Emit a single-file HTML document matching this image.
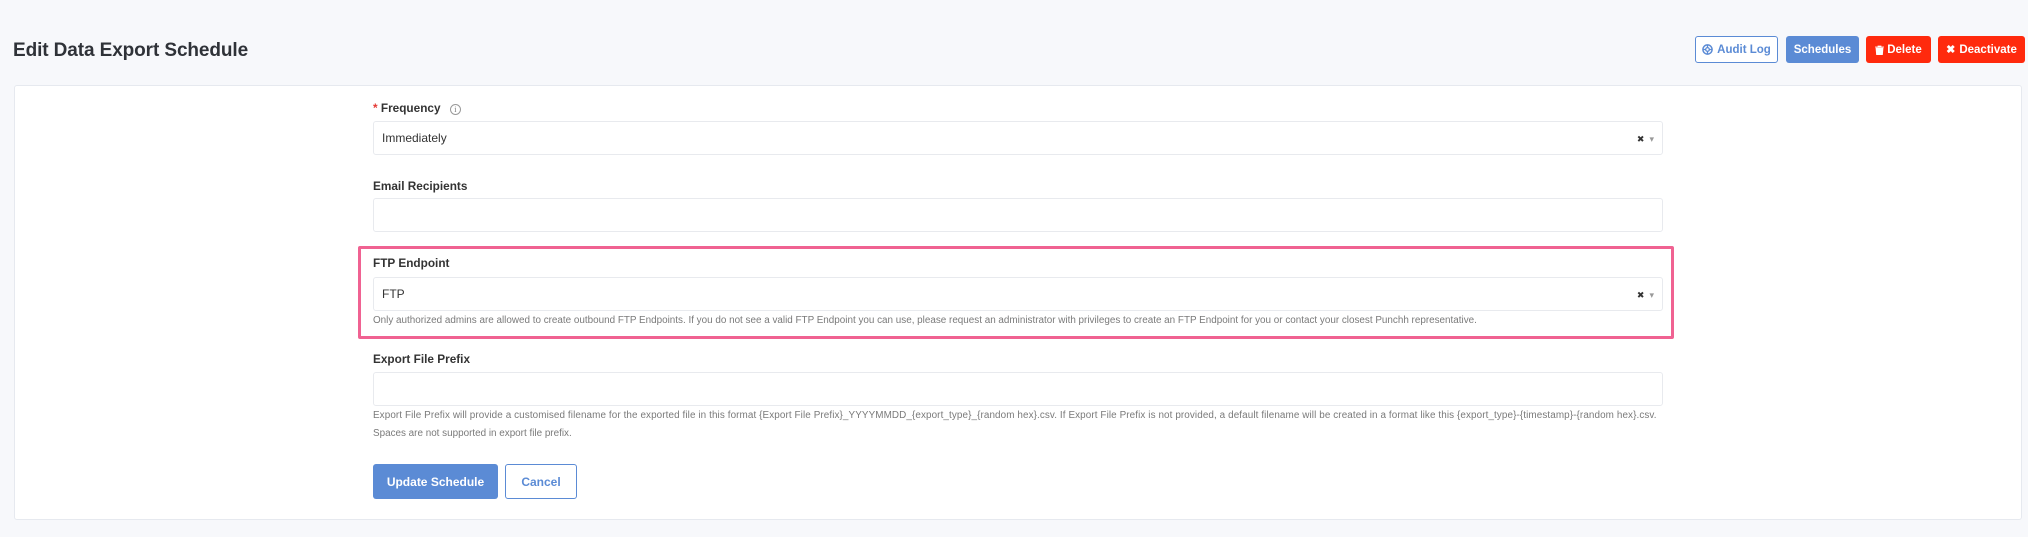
<!DOCTYPE html>
<html><head><meta charset="utf-8"><style>
*{box-sizing:border-box;margin:0;padding:0}
body{width:2028px;height:537px;background:#f7f8fb;font-family:"Liberation Sans",Arial,sans-serif;position:relative;overflow:hidden;color:#333}
.abs{position:absolute}
h1{position:absolute;left:13px;top:40px;font-size:19px;font-weight:bold;color:#2f3238;letter-spacing:-0.1px}
.btn{position:absolute;top:36px;height:27px;border-radius:3px;font-size:11.5px;font-weight:bold;display:flex;align-items:center;justify-content:center;color:#fff}
.card{position:absolute;left:14px;top:85px;width:2008px;height:435px;background:#fff;border:1px solid #e6e9ef;border-radius:3px}
.lbl{position:absolute;left:373px;font-size:11.8px;font-weight:bold;color:#333}
.inp{position:absolute;left:373px;width:1290px;height:34px;border:1px solid #e8eaee;border-radius:3px;background:#fff;font-size:12px;color:#333;padding-left:8px;display:flex;align-items:center}
.help{position:absolute;left:373px;font-size:9.9px;color:#7a7a7a;white-space:nowrap}
.ctl{position:absolute;right:8px;top:12px;font-size:9px;color:#333}
</style></head><body>
<h1>Edit Data Export Schedule</h1>
<div class="btn" style="left:1695px;width:83px;border:1px solid #5b8bd5;color:#5b8bd5;background:#fff"><svg width="11" height="11" viewBox="0 0 12 12" style="margin-right:4px"><circle cx="6" cy="6" r="5" fill="none" stroke="#5b8bd5" stroke-width="1.6"/><circle cx="6" cy="6" r="2" fill="none" stroke="#5b8bd5" stroke-width="1.4"/><path d="M6 1v3M6 8v3M1 6h3M8 6h3" stroke="#5b8bd5" stroke-width="1.4"/></svg>Audit Log</div>
<div class="btn" style="left:1786px;width:73px;background:#5b8bd5">Schedules</div>
<div class="btn" style="left:1866px;width:65px;background:#ff2a0d"><svg width="9" height="10" viewBox="0 0 9 10" style="margin-right:3px"><path d="M0 2h9M3 2V1h3v1M1 3h7l-.6 7H1.6z" fill="#fff" stroke="#fff" stroke-width=".8"/></svg>Delete</div>
<div class="btn" style="left:1938px;width:87px;background:#ff2a0d"><span style="margin-right:4px;font-size:11px">✖</span>Deactivate</div>
<div class="card"></div>
<div class="lbl" style="top:101px"><span style="color:#e53935">*</span> Frequency <span style="display:inline-block;width:11px;height:11px;border:1px solid #999;border-radius:50%;font-size:8px;font-weight:normal;color:#777;text-align:center;line-height:10px;margin-left:6px;font-family:'Liberation Serif',serif">i</span></div>
<div class="inp" style="top:121px">Immediately<span class="ctl">✖ &nbsp;<span style="color:#999">▾</span></span></div>
<div class="lbl" style="top:179px">Email Recipients</div>
<div class="inp" style="top:198px"></div>
<div class="abs" style="left:358px;top:246px;width:1316px;height:93px;border:3px solid #f06292;border-radius:2px"></div>
<div class="lbl" style="top:256px">FTP Endpoint</div>
<div class="inp" style="top:277px">FTP<span class="ctl">✖ &nbsp;<span style="color:#999">▾</span></span></div>
<div class="help" style="top:315px">Only authorized admins are allowed to create outbound FTP Endpoints. If you do not see a valid FTP Endpoint you can use, please request an administrator with privileges to create an FTP Endpoint for you or contact your closest Punchh representative.</div>
<div class="lbl" style="top:352px">Export File Prefix</div>
<div class="inp" style="top:372px"></div>
<div class="help" style="top:410px;letter-spacing:0.1px">Export File Prefix will provide a customised filename for the exported file in this format {Export File Prefix}_YYYYMMDD_{export_type}_{random hex}.csv. If Export File Prefix is not provided, a default filename will be created in a format like this {export_type}-{timestamp}-{random hex}.csv.</div>
<div class="help" style="top:428px">Spaces are not supported in export file prefix.</div>
<div class="btn" style="left:373px;top:464px;width:125px;height:35px;background:#5b8bd5;font-size:12px">Update Schedule</div>
<div class="btn" style="left:505px;top:464px;width:72px;height:35px;background:#fff;border:1px solid #5b8bd5;color:#5b8bd5;font-size:12px">Cancel</div>
</body></html>
